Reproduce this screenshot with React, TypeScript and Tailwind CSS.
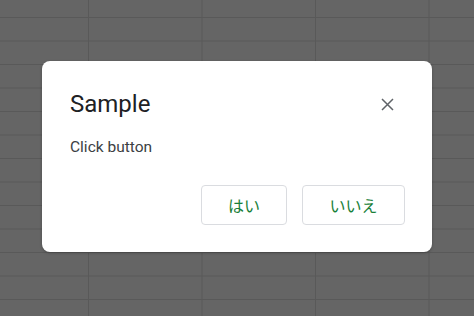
import React from "react";

export default function App() {
  return (
    <div className="w-[474px] h-[316px] flex items-center justify-center bg-[#656565] bg-[linear-gradient(to_right,#595959_1px,transparent_1px),linear-gradient(to_bottom,#595959_1px,transparent_1px)] bg-[size:113.5px_100%,100%_23.5px] bg-[position:88px_0,0_17px] font-['Roboto','Noto_Sans_CJK_JP',sans-serif]">
      <div className="w-[390px] h-[191px] -mt-[3px] bg-white rounded-[8px] shadow-[0_1px_3px_rgba(0,0,0,0.25)] px-[28px] pt-[27px] pb-[27px] flex flex-col">
        <div className="flex items-center justify-between h-[32px]">
          <div className="text-[24px] leading-[32px] text-[#202124]">Sample</div>
          <button className="w-[24px] h-[24px] mr-[5px] flex items-center justify-center text-[#5f6368]">
            <svg width="13" height="13" viewBox="0 0 13 13" fill="none" stroke="currentColor" strokeWidth="1.5">
              <path d="M1 1L12 12M12 1L1 12" />
            </svg>
          </button>
        </div>
        <div className="mt-[17px] text-[15.5px] leading-[20px] text-[#3c4043]">Click button</div>
        <div className="mt-auto flex justify-end gap-[15px] -mr-[1px]">
          <button className="w-[86px] h-[40px] border border-[#dadce0] rounded-[4px] text-[16px] text-[#188038] font-['Noto_Sans_CJK_JP',sans-serif]">
            はい
          </button>
          <button className="w-[103px] h-[40px] border border-[#dadce0] rounded-[4px] text-[16px] text-[#188038] font-['Noto_Sans_CJK_JP',sans-serif]">
            いいえ
          </button>
        </div>
      </div>
    </div>
  );
}
